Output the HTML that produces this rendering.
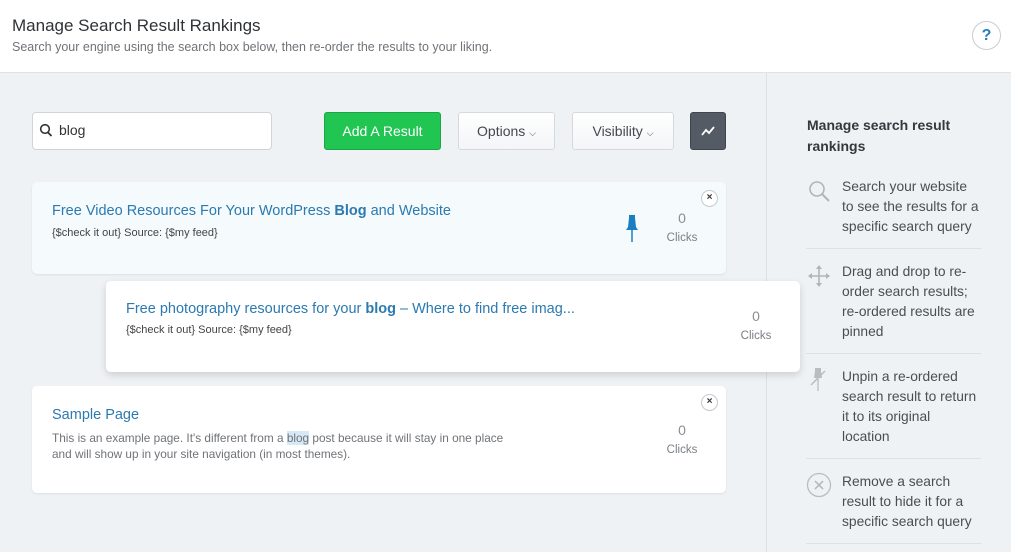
<!DOCTYPE html>
<html><head><style>
*{box-sizing:border-box;margin:0;padding:0}
body{width:1011px;height:552px;overflow:hidden;font-family:"Liberation Sans",sans-serif;background:#eff2f5;position:relative;color:#333}
.hdr{position:absolute;left:0;top:0;width:1011px;height:73px;background:#fff;border-bottom:1px solid #dfe3e8}
.t1{position:absolute;left:12px;top:16px;font-size:17px;color:#2f3236}
.t2{position:absolute;left:12px;top:40px;font-size:12.5px;color:#6f7378}
.help{position:absolute;left:972px;top:21px;width:29px;height:29px;border:1px solid #c8ced4;border-radius:50%;text-align:center;line-height:27px;font-size:16px;font-weight:bold;color:#2a7fb8}
.side{position:absolute;left:766px;top:73px;width:245px;height:479px;border-left:1px solid #dde1e5;background:#eff2f5}
.abs{position:absolute}
.btn{position:absolute;top:112px;height:38px;border-radius:3px;font-size:14px;line-height:37px;text-align:center}
.wb{background:linear-gradient(#fff,#f3f5f7);border:1px solid #d5d9de;color:#44484d}
.card{position:absolute;border-radius:5px}
.ttl{position:absolute;font-size:14.5px;color:#2b7ab0}
.sub{position:absolute;font-size:11px;color:#444}
.cnt{position:absolute;text-align:center;font-size:14px;color:#8a8f95;width:40px}
.cnt b{display:block;font-size:11.5px;font-weight:normal;margin-top:6px;color:#7a7f85}
.x{position:absolute;width:17px;height:17px;border:1px solid #c5cad0;border-radius:50%;background:#fff;font-size:10px;text-align:center;line-height:14px;color:#333;font-weight:bold}
.it{position:absolute;left:842px;font-size:13.8px;line-height:20px;color:#4a4e53;width:140px;white-space:nowrap}
.sep{position:absolute;left:806px;width:175px;height:1px;background:#dde1e5}
</style></head><body>
<div class="hdr">
<div class="t1">Manage Search Result Rankings</div>
<div class="t2">Search your engine using the search box below, then re-order the results to your liking.</div>
<div class="help">?</div>
</div>
<div class="side"></div>
<div class="abs" style="left:32px;top:112px;width:240px;height:38px;background:#fff;border:1px solid #cfd4d9;border-radius:4px"></div>
<svg class="abs" style="left:39px;top:123px" width="14" height="15"><circle cx="6" cy="6" r="4.3" fill="none" stroke="#333" stroke-width="1.6"/><line x1="9" y1="9.5" x2="12.5" y2="13" stroke="#333" stroke-width="1.8"/></svg>
<div class="abs" style="left:59px;top:122px;font-size:14px;color:#333">blog</div>
<div class="btn" style="left:324px;width:117px;background:#21c552;border:1px solid #1ca447;color:#fff">Add A Result</div>
<div class="btn wb" style="left:458px;width:97px">Options <span style="font-size:9px">&#9013;</span></div>
<div class="btn wb" style="left:572px;width:102px">Visibility <span style="font-size:9px">&#9013;</span></div>
<div class="btn" style="left:690px;width:36px;background:#545b65;border:1px solid #40464e"><svg width="14" height="12" style="margin-top:12px"><polyline points="1,10 5,5 8,8 13,2" fill="none" stroke="#fff" stroke-width="1.8"/></svg></div>

<div class="card" style="left:32px;top:182px;width:694px;height:92px;background:#f5fafd;box-shadow:0 1px 2px rgba(0,0,0,.08)"></div>
<div class="ttl" style="left:52px;top:203px">Free Video Resources For Your WordPress <b>Blog</b> and Website</div>
<div class="sub" style="left:52px;top:227px">{$check it out} Source: {$my feed}</div>
<svg class="abs" style="left:625px;top:215px" width="14" height="28"><rect x="4" y="0" width="6" height="3" fill="#1a7fc2"/><path d="M4 3 L10 3 L11 12 L13 15 L1 15 L3 12 Z" fill="#1a7fc2"/><line x1="7" y1="15" x2="7" y2="27" stroke="#1a7fc2" stroke-width="1.5"/></svg>
<div class="cnt" style="left:662px;top:210px">0<b>Clicks</b></div>
<div class="x" style="left:701px;top:190px">×</div>

<div class="card" style="left:106px;top:281px;width:694px;height:91px;background:#fff;box-shadow:0 3px 8px rgba(0,0,0,.15)"></div>
<div class="ttl" style="left:126px;top:301px">Free photography resources for your <b>blog</b> – Where to find free imag...</div>
<div class="sub" style="left:126px;top:324px">{$check it out} Source: {$my feed}</div>
<div class="cnt" style="left:736px;top:308px">0<b>Clicks</b></div>

<div class="card" style="left:32px;top:386px;width:694px;height:107px;background:#fff;box-shadow:0 1px 2px rgba(0,0,0,.08)"></div>
<div class="ttl" style="left:52px;top:407px">Sample Page</div>
<div class="sub" style="left:52px;top:430px;color:#6f7378;line-height:16px;font-size:11.8px">This is an example page. It's different from a <span style="background:#d7e9f6">blog</span> post because it will stay in one place<br>and will show up in your site navigation (in most themes).</div>
<div class="cnt" style="left:662px;top:422px">0<b>Clicks</b></div>
<div class="x" style="left:701px;top:394px">×</div>

<div class="abs" style="left:807px;top:115px;font-size:14px;font-weight:bold;color:#34383d;line-height:21px">Manage search result<br>rankings</div>
<svg class="abs" style="left:808px;top:180px" width="24" height="24"><circle cx="9" cy="9" r="7" fill="none" stroke="#b0b5ba" stroke-width="1.6"/><line x1="14" y1="14" x2="21" y2="21" stroke="#b0b5ba" stroke-width="2"/></svg>
<div class="it" style="top:177px">Search your website<br>to see the results for a<br>specific search query</div>
<div class="sep" style="top:248px"></div>
<svg class="abs" style="left:807px;top:264px" width="24" height="24"><path d="M12 2V22M2 12H22" stroke="#b0b5ba" stroke-width="1.6"/><path d="M12 1l-3 4h6zM12 23l-3-4h6zM1 12l4-3v6zM23 12l-4-3v6z" fill="#b0b5ba"/></svg>
<div class="it" style="top:262px">Drag and drop to re-<br>order search results;<br>re-ordered results are<br>pinned</div>
<div class="sep" style="top:353px"></div>
<svg class="abs" style="left:808px;top:367px" width="20" height="26"><path d="M7 1h6v3l1 7H6l1-7z" fill="#b8bdc2"/><line x1="10" y1="11" x2="10" y2="24" stroke="#b8bdc2" stroke-width="1.3"/><line x1="3" y1="18" x2="17" y2="4" stroke="#b8bdc2" stroke-width="1.5"/></svg>
<div class="it" style="top:367px">Unpin a re-ordered<br>search result to return<br>it to its original<br>location</div>
<div class="sep" style="top:458px"></div>
<svg class="abs" style="left:806px;top:472px" width="26" height="26"><circle cx="13" cy="13" r="11.5" fill="none" stroke="#b8bdc2" stroke-width="1.3"/><path d="M9 9l8 8M17 9l-8 8" stroke="#b0b5ba" stroke-width="1.5"/></svg>
<div class="it" style="top:472px">Remove a search<br>result to hide it for a<br>specific search query</div>
<div class="sep" style="top:543px"></div>
</body></html>
